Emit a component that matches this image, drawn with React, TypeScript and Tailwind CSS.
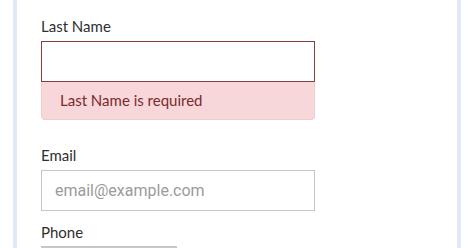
export default function App() {
  return (
    <div className="w-[474px] h-[248px] overflow-hidden bg-white">
      <div className="ml-[13px] w-[448px] h-[248px] border-l-4 border-r-4 border-[#e2e8f8] bg-white pl-[24px]">
        <div className="flex flex-col pt-[16px]" style={{ fontFamily: "Lato, 'Open Sans', sans-serif" }}>
          <label className="text-[15px] leading-[20px] text-[#2f2f2f] mb-[5px]">Last Name</label>
          <div className="w-[274px] h-[41px] border border-[#8a3d3d] bg-white"></div>
          <div className="w-[274px] h-[38px] bg-[#f8d7da] border border-t-0 border-[#f1cccf] rounded-b-[4px] pl-[18px] text-[15px] leading-[37px] text-[#7a2a2e]">
            Last Name is required
          </div>
          <label className="mt-[25px] text-[15px] leading-[20px] text-[#2f2f2f] mb-[5px]">Email</label>
          <div className="w-[274px] h-[41px] border border-[#c6c6c6] bg-white pl-[13px] flex items-center">
            <span className="text-[16px] text-[#9b9b9b]" style={{ fontFamily: "Roboto, sans-serif" }}>email@example.com</span>
          </div>
          <label className="mt-[11px] text-[15px] leading-[20px] text-[#2f2f2f] mb-[4px]">Phone</label>
          <div className="w-[136px] h-[41px] border-t-2 border-[#c6c6c6] bg-white"></div>
        </div>
      </div>
    </div>
  );
}
